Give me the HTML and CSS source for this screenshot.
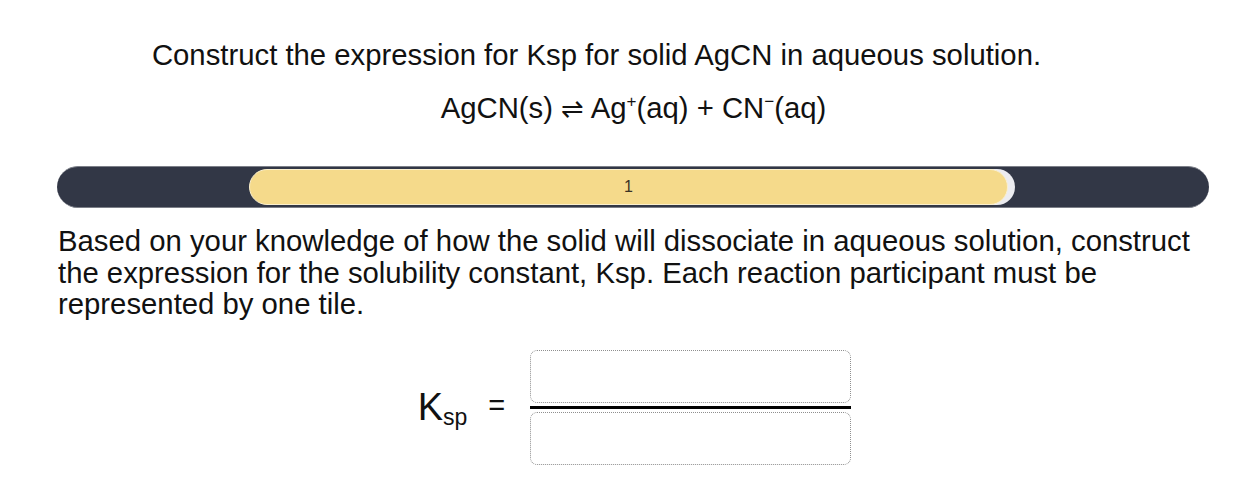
FILE: index.html
```html
<!DOCTYPE html>
<html lang="en">
<head>
<meta charset="utf-8">
<title>Ksp expression</title>
<link rel="stylesheet" href="styles.css">
</head>
<body>
<main class="page">
  <p class="prompt">Construct the expression for Ksp for solid AgCN in aqueous solution.</p>
  <p class="equation">AgCN(s) <span class="arrows">&#8652;</span> Ag<sup>+</sup>(aq) + CN<sup>&minus;</sup>(aq)</p>
  <div class="progress">
    <div class="progress-fill">1</div>
  </div>
  <p class="instructions">Based on your knowledge of how the solid will dissociate in aqueous solution, construct the expression for the solubility constant, Ksp. Each reaction participant must be represented by one tile.</p>
  <div class="expression">
    <div class="ksp">K<sub>sp</sub></div>
    <div class="equals">=</div>
    <div class="fraction">
      <div class="slot"></div>
      <div class="bar"></div>
      <div class="slot"></div>
    </div>
  </div>
</main>
</body>
</html>
```
FILE: styles.css
```css
html, body {
  margin: 0;
  padding: 0;
  background: #ffffff;
}
body {
  font-family: "Liberation Sans", Arial, sans-serif;
  color: #111111;
}
.page {
  display: flex;
  flex-direction: column;
  padding-top: 39px;
}
.prompt {
  margin: 0;
  font-size: 29.3px;
  line-height: 32px;
  text-align: center;
  padding-right: 58px;
}
.equation {
  margin: 21px 0 0;
  font-size: 29.3px;
  line-height: 32px;
  text-align: center;
  padding-left: 16px;
}
.equation sup {
  font-size: 17px;
  vertical-align: 11px;
  line-height: 0;
}
.arrows {
  font-size: 27px;
}
.progress {
  margin: 41px 42px 0 57px;
  height: 42px;
  box-sizing: border-box;
  border-radius: 21px;
  background: #323746;
  border-top: 1px solid #7c7f88;
  border-bottom: 1px solid #7c7f88;
  display: flex;
  align-items: center;
  padding-left: 192px;
}
.progress-fill {
  width: 759px;
  height: 36px;
  box-sizing: border-box;
  border-radius: 18px;
  background: #f5da8b;
  border: 1px solid #fbf0cf;
  box-shadow: 7px 0 0 #ececf0;
  display: flex;
  align-items: center;
  justify-content: center;
  font-size: 16px;
  color: #3a3326;
}
.instructions {
  margin: 17px 40px 0 58px;
  font-size: 29.3px;
  line-height: 31.5px;
}
.expression {
  display: flex;
  align-items: center;
  justify-content: center;
  padding-left: 18px;
  margin-top: 30px;
}
.ksp {
  font-size: 38px;
  line-height: 1;
  margin-top: 0;
}
.ksp sub {
  font-size: 23px;
  vertical-align: -5px;
  line-height: 0;
}
.equals {
  font-size: 29px;
  margin-left: 21px;
  margin-right: 25px;
  margin-bottom: 3px;
}
.fraction {
  width: 321px;
  display: flex;
  flex-direction: column;
}
.slot {
  height: 53px;
  box-sizing: border-box;
  border: 1px dotted #8f8f8f;
  border-radius: 7px;
}
.bar {
  height: 3px;
  background: #000000;
  margin: 3px 0;
}
```
